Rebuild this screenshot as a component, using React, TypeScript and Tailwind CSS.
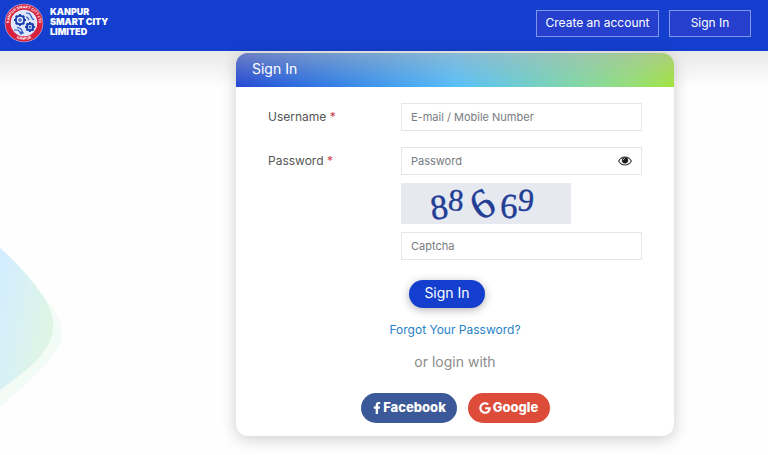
import { useState } from 'react';
import { FaFacebookF, FaGoogle } from 'react-icons/fa';

type CaptchaDigit = { char: string; x: number; y: number; size: number; angle: number };

const captchaDigits: CaptchaDigit[] = [
  { char: '8', x: 38, y: 24, size: 35, angle: -8 },
  { char: '8', x: 55, y: 17, size: 31, angle: 4 },
  { char: '6', x: 81, y: 21, size: 42, angle: -30 },
  { char: '6', x: 108, y: 23, size: 35, angle: 2 },
  { char: '9', x: 125, y: 17, size: 32, angle: 6 },
];

const gearTeeth = [0, 45, 90, 135, 180, 225, 270, 315];

const Gear = ({ x, y, r }: { x: number; y: number; r: number }) => (
  <g transform={`translate(${x} ${y})`} stroke="#1b3fae" fill="none">
    {gearTeeth.map((angle) => (
      <path key={angle} d={`M0 ${-r}V${-r - 1.8}`} strokeWidth="2" transform={`rotate(${angle})`} />
    ))}
    <circle r={r} strokeWidth="2" />
    <circle r={r * 0.3} strokeWidth="1" />
  </g>
);

const Logo = () => (
  <svg viewBox="0 0 40 40" className="w-10 h-10 shrink-0" aria-hidden="true">
    <defs>
      <path id="ringTop" d="M5.5 24A15 15 0 1 1 34.5 24" />
      <path id="ringBottom" d="M7 31A17.4 17.4 0 0 0 33 31" />
    </defs>
    <circle cx="20" cy="20" r="19.3" fill="#b9c4f0" />
    <circle cx="20" cy="20" r="18.8" fill="#d8203f" />
    <circle cx="20" cy="20" r="13.3" fill="#dfe8fb" />
    <Gear x={16} y={17} r={4.2} />
    <Gear x={26} y={24} r={3.2} />
    <path d="M22 10q4 0 5 3t3 4M22 14q2 0 3 3M10 27h4l3 3h3M13 24l4 2 2 4" stroke="#2d59c6" strokeWidth="1.2" fill="none" />
    <circle cx="17" cy="30" r="1.5" fill="#2d59c6" />
    <g fill="#ffffff" fontSize="3.6" fontWeight="700" textAnchor="middle">
      <text><textPath href="#ringTop" startOffset="50%">KANPUR SMART CITY LTD</textPath></text>
      <text><textPath href="#ringBottom" startOffset="50%">KANPUR</textPath></text>
    </g>
  </svg>
);

const EyeIcon = () => (
  <svg viewBox="0 0 14 10" className="w-[14px] h-[10px]" aria-hidden="true">
    <path d="M.6 5Q3 1 7 1t6.4 4Q11 9 7 9T.6 5Z" fill="none" stroke="#333333" strokeWidth="1.1" />
    <circle cx="7" cy="4.3" r="3.1" fill="#151a1c" />
    <path d="M5.2 4.2Q5.3 2.7 6.8 2.5" fill="none" stroke="#ffffff" strokeWidth=".7" />
  </svg>
);

const Backdrop = () => (
  <svg viewBox="0 0 64 180" className="absolute left-0 top-[240px] w-16 h-[180px]" aria-hidden="true">
    <defs>
      <linearGradient id="leaf" x1="0" y1="0.2" x2="1" y2="0.7">
        <stop offset="0" stopColor="#d3edff" />
        <stop offset="1" stopColor="#e0f6e2" />
      </linearGradient>
    </defs>
    <path d="M0 8Q30 33 54 70 66 88 60 104 53 119 27 143L0 167Z" fill="#f3fbf6" />
    <path d="M0 8Q24 28 46 61 54 75 53 91 51 106 34 123 22 134 0 150Z" fill="url(#leaf)" />
  </svg>
);

const inputStyle =
  'block w-full h-7 px-[9px] text-[11px] text-gray-700 bg-white border border-[#e6e6e6] outline-none placeholder:text-[#777b80]';
const navButton = 'h-[27px] text-xs text-white bg-[#2640cd] border border-[#7f96ef]';

const App = () => {
  const [visible, setVisible] = useState(false);

  return (
    <div className="relative min-h-screen overflow-hidden bg-[#fefefe] font-['Inter',sans-serif]">
      <div className="absolute inset-x-0 top-[51px] h-9 bg-linear-to-b from-[#e9e9e9] to-[#fefefe]" />
      <Backdrop />
      <header className="relative flex items-center justify-between h-[51px] pl-1 pr-[17px] pb-[5px] bg-[#143fce]">
        <a href="#" className="flex items-center gap-[6px]">
          <Logo />
          <span className="flex flex-col pb-[2px] text-[9px] leading-[10px] font-black text-white">
            <span>KANPUR</span>
            <span>SMART CITY</span>
            <span>LIMITED</span>
          </span>
        </a>
        <nav className="flex gap-[10px]">
          <button type="button" className={`${navButton} w-[123px]`}>Create an account</button>
          <button type="button" className={`${navButton} w-[82px]`}>Sign In</button>
        </nav>
      </header>

      <main className="relative ml-[236px] mr-[94px] mt-[2px] mb-4 rounded-xl bg-white shadow-[0_3px_16px_rgba(0,0,0,0.2)]">
        <div className="h-[34px] rounded-t-xl bg-linear-to-r from-[#2447d5] via-[#58bffa] via-50% to-[#a3e53b]">
          <h1 className="h-full px-4 rounded-t-xl text-sm leading-8 text-white bg-linear-to-b from-[#b5b5b5]/50 to-transparent">
            Sign In
          </h1>
        </div>
        <form className="px-8 pt-4 pb-[13px]" onSubmit={(e) => e.preventDefault()}>
          <div className="grid grid-cols-[133px_1fr] mb-4">
            <label htmlFor="username" className="text-xs leading-7 text-[#555555]">
              Username <span className="text-[#c93c49]">*</span>
            </label>
            <input id="username" type="text" placeholder="E-mail / Mobile Number" className={inputStyle} />
          </div>
          <div className="grid grid-cols-[133px_1fr]">
            <label htmlFor="password" className="text-xs leading-7 text-[#555555]">
              Password <span className="text-[#c93c49]">*</span>
            </label>
            <div className="flex flex-col gap-2">
              <div className="relative">
                <input id="password" type={visible ? 'text' : 'password'} placeholder="Password" className={inputStyle} />
                <button
                  type="button"
                  aria-label="Show password"
                  className="absolute right-[10px] inset-y-0 flex items-center"
                  onClick={() => setVisible(!visible)}
                >
                  <EyeIcon />
                </button>
              </div>
              <svg viewBox="0 0 170 41" className="w-[170px] h-[41px] bg-[#e7e9f0] overflow-visible">
                {captchaDigits.map((digit, index) => (
                  <text
                    key={index}
                    transform={`translate(${digit.x} ${digit.y}) rotate(${digit.angle})`}
                    y={digit.size * 0.34}
                    fontSize={digit.size}
                    textAnchor="middle"
                    fill="#213d94"
                    stroke="#213d94"
                    strokeWidth="0.4"
                    className="font-['Liberation_Serif',serif]"
                  >
                    {digit.char}
                  </text>
                ))}
              </svg>
              <input type="text" aria-label="Captcha" placeholder="Captcha" className={inputStyle} />
            </div>
          </div>

          <div className="flex flex-col items-center mt-5">
            <button
              type="submit"
              className="w-[76px] h-7 mr-4 pb-[2px] text-sm text-white bg-[#143fce] rounded-full shadow-[0_2px_8px_rgba(0,0,0,0.3)]"
            >
              Sign In
            </button>
            <a href="#" className="mt-3 text-xs leading-5 text-[#2782c8]">Forgot Your Password?</a>
            <p className="mt-3 text-sm leading-5 text-[#8c8c8c]">or login with</p>
            <div className="flex gap-[11px] mt-[21px]">
              <button type="button" className="flex items-center justify-center w-24 h-[30px] text-[13px] font-extrabold text-white bg-[#3b5998] rounded-full">
                <FaFacebookF className="w-3 h-3" />Facebook
              </button>
              <button type="button" className="flex items-center justify-center gap-[2px] w-[82px] h-[30px] text-[13px] font-extrabold text-white bg-[#dd4b39] rounded-full">
                <FaGoogle className="w-3 h-3" />Google
              </button>
            </div>
          </div>
        </form>
      </main>
    </div>
  );
};
export default App;
